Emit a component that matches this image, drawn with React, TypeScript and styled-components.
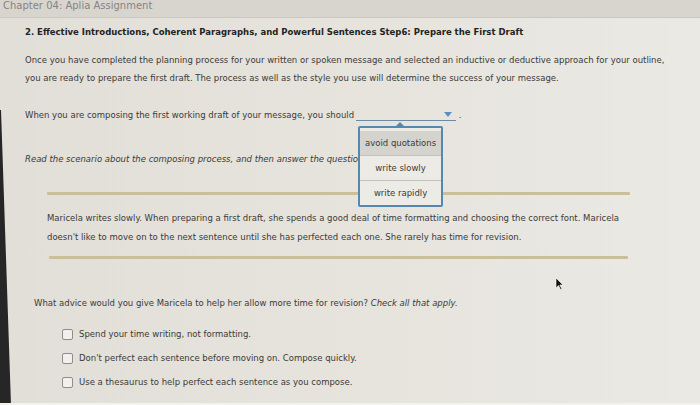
import styled, { createGlobalStyle } from 'styled-components';

const GlobalStyle = createGlobalStyle`
    html, body {
        margin: 0;
        padding: 0;
        background: #e4e1da;
    }
    body {
        font-family: "DejaVu Sans", Verdana, sans-serif;
    }
`;

const Page = styled.div`
    position: relative;
    width: 700px;
    height: 405px;
    overflow: hidden;
    background: linear-gradient(90deg, #e2dfd8 0%, #e6e4dd 55%, #ebe9e4 100%);
    color: #3b3a38;
`;

const Header = styled.div`
    height: 17px;
    padding-left: 3px;
    background: #d8d5cf;
    border-bottom: 1px solid #cbc8c1;
    overflow: hidden;
    font-size: 10px;
    line-height: 12px;
    color: #86847f;
`;

const Content = styled.div`
    padding: 0 0 0 25px;
`;

const Title = styled.h2`
    margin: 8px 0 0;
    font-size: 8.5px;
    line-height: 12px;
    font-weight: bold;
    color: #232322;
`;

const Text = styled.p<{ $top?: number; $lh?: number }>`
    margin: ${p => p.$top ?? 0}px 0 0;
    font-size: 8.5px;
    line-height: ${p => p.$lh ?? 18}px;
    white-space: nowrap;
`;

const Scenario = styled.div`
    padding-left: 22px;
    width: 583px;
`;

const Rule = styled.div<{ $top: number; $width: number; $left?: number }>`
    margin-top: ${p => p.$top}px;
    margin-left: ${p => p.$left ?? 0}px;
    width: ${p => p.$width}px;
    height: 3px;
    background: #c9bf9b;
    border-radius: 1px;
`;

const Question = styled.div`
    margin-top: 38px;
    padding-left: 9px;
    font-size: 8.5px;
    line-height: 12px;
    em {
        font-style: italic;
    }
`;

const Options = styled.ul`
    list-style: none;
    margin: 19px 0 0;
    padding: 0 0 0 37px;
    display: flex;
    flex-direction: column;
    gap: 12px;
`;

const Option = styled.li`
    display: flex;
    align-items: center;
    gap: 6px;
    font-size: 8.5px;
    line-height: 12px;
`;

const Box = styled.span`
    width: 9px;
    height: 9px;
    border: 1px solid #8e8d8a;
    border-radius: 2px;
    background: #f1f0ec;
`;

const Blank = styled.span`
    position: relative;
    display: inline-block;
    width: 100px;
    height: 10px;
    margin-left: 2px;
    vertical-align: -3px;
    border-bottom: 1px solid #6e8aa3;
`;

const Caret = styled.span`
    position: absolute;
    right: 4px;
    top: 2px;
    width: 0;
    height: 0;
    border-left: 4px solid transparent;
    border-right: 4px solid transparent;
    border-top: 5px solid #5b8ec0;
`;

const Menu = styled.div`
    position: absolute;
    left: 2px;
    top: 16px;
    width: 81px;
    border: 2px solid #5686b2;
    border-radius: 2px;
    background: #ecebe6;
    padding-top: 3px;
    z-index: 2;
    &::before {
        content: '';
        position: absolute;
        left: 36px;
        top: -6px;
        border-left: 4px solid transparent;
        border-right: 4px solid transparent;
        border-bottom: 4px solid #5686b2;
    }
`;

const MenuItem = styled.div<{ $active?: boolean }>`
    height: 24px;
    line-height: 24px;
    text-align: center;
    font-size: 8.5px;
    color: #3b3a38;
    background: ${p => (p.$active ? '#d5d3ce' : 'transparent')};
    & + & {
        border-top: 1px solid #c4c2bd;
    }
`;

const Pointer = styled.svg`
    position: absolute;
    left: 555px;
    top: 278px;
`;

const Edge = styled.div`
    position: absolute;
    left: 0;
    top: 0;
    width: 12px;
    height: 405px;
    background: #262626;
    clip-path: polygon(0 110px, 1px 110px, 11px 405px, 0 405px);
`;

const BottomLine = styled.div`
    position: absolute;
    left: 0;
    right: 0;
    bottom: 0;
    height: 2px;
    background: #f3f2ee;
`;

export default function App() {
    return (
        <>
            <GlobalStyle />
            <Page>
                <Header>Chapter 04: Aplia Assignment</Header>
                <Content>
                    <Title>
                        2. Effective Introductions, Coherent Paragraphs, and Powerful Sentences Step6: Prepare the First Draft
                    </Title>
                    <Text $top={13}>
                        Once you have completed the planning process for your written or spoken message and selected an inductive or deductive approach for your outline,
                        <br />
                        you are ready to prepare the first draft. The process as well as the style you use will determine the success of your message.
                    </Text>
                    <Text $top={22} $lh={12}>
                        When you are composing the first working draft of your message, you should
                        <Blank>
                            <Caret />
                            <Menu>
                                <MenuItem $active>avoid quotations</MenuItem>
                                <MenuItem>write slowly</MenuItem>
                                <MenuItem>write rapidly</MenuItem>
                            </Menu>
                        </Blank>
                        {' '}.
                    </Text>
                    <Text $top={32} $lh={12}>
                        <em>Read the scenario about the composing process, and then answer the question.</em>
                    </Text>
                    <Scenario>
                        <Rule $top={27} $width={583} />
                        <Text $top={14} $lh={19}>
                            Maricela writes slowly. When preparing a first draft, she spends a good deal of time formatting and choosing the correct font. Maricela
                            <br />
                            doesn&apos;t like to move on to the next sentence until she has perfected each one. She rarely has time for revision.
                        </Text>
                        <Rule $top={9} $width={579} $left={2} />
                    </Scenario>
                    <Question>
                        What advice would you give Maricela to help her allow more time for revision? <em>Check all that apply.</em>
                    </Question>
                    <Options>
                        <Option><Box />Spend your time writing, not formatting.</Option>
                        <Option><Box />Don&apos;t perfect each sentence before moving on. Compose quickly.</Option>
                        <Option><Box />Use a thesaurus to help perfect each sentence as you compose.</Option>
                    </Options>
                </Content>
                <Pointer width="8" height="12" viewBox="0 0 8 12">
                    <path d="M1 0 L1 10 L3.5 7.5 L5.5 11.5 L6.8 10.8 L4.8 7 L8 7 Z" fill="#111" stroke="#fff" strokeWidth="0.6" />
                </Pointer>
                <Edge />
                <BottomLine />
            </Page>
        </>
    );
}
